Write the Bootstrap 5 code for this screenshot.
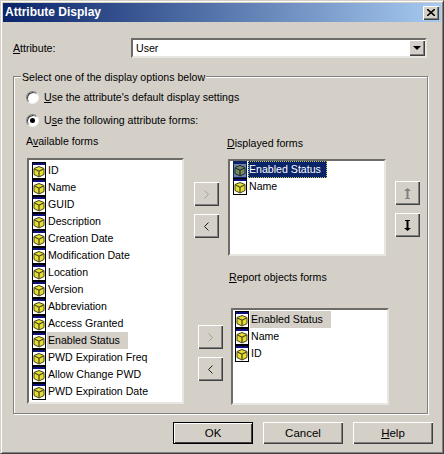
<!DOCTYPE html>
<html lang="en">
<head>
<meta charset="utf-8">
<title>Attribute Display</title>
<link rel="stylesheet" href="https://cdn.jsdelivr.net/npm/bootstrap@5.3.0/dist/css/bootstrap.min.css">
<style>
html,body{margin:0;padding:0;width:444px;height:454px;overflow:hidden;background:#d4d0c8}
body{font-family:"Liberation Sans",Arial,sans-serif;font-size:10.6px;line-height:13px;color:#000}
u{text-decoration:underline;text-underline-offset:1px}
.dlg{width:444px;height:454px;background:#d4d0c8;border:1px solid;border-color:#d4d0c8 #404040 #404040 #d4d0c8;box-shadow:inset 1px 1px 0 #fff,inset -1px -1px 0 #808080;padding:2px}
.tbar{height:19px;margin-top:0;background:linear-gradient(90deg,#0a246a,#a6caf0);color:#fff;font-weight:700;font-size:12px;padding:0 2px 0 2px}
.xbtn{width:16px;height:14px;background:#d4d0c8;border:0;padding:0;box-shadow:inset 1px 1px 0 #fff,inset -1px -1px 0 #404040,inset -2px -2px 0 #808080}
.attr-row{height:20px;margin:16px 12px 0 10px}
.attr-lbl{width:118px}
.combo{width:296px;height:20px;background:#fff;border:2px solid;border-color:#6e6c68 #e8e6e0 #e8e6e0 #6e6c68;padding-left:3px}
.drop{width:16px;height:16px;background:#d4d0c8;box-shadow:inset 1px 1px 0 #fff,inset -1px -1px 0 #404040,inset -2px -2px 0 #808080}
.gbox{position:relative;width:415px;height:338px;margin:18px 0 0 10px;border:1px solid #808080;box-shadow:1px 1px 0 #fff,inset 1px 1px 0 #fff;padding:13px 0 0 12px}
.gtitle{position:absolute;left:7px;top:-6px;background:#d4d0c8;padding:0 1px}
.rline{height:14px;margin-bottom:9px}
.rdo{width:13px;height:13px;border-radius:50%;background:#fff;border:1px solid;border-color:#808080 #f4f2ee #f4f2ee #808080;box-shadow:inset 1px 1px 0 #404040;margin-right:5px;position:relative}
.rdo.on::after{content:"";position:absolute;left:3px;top:3px;width:5px;height:5px;border-radius:50%;background:#000}
.col-a{width:157px;margin-top:-1px}
.col-b{margin-left:9px}
.lbl-a{height:13px;margin-bottom:10px}
.lst{background:#fff;border:2px solid;border-color:#6e6c68 #e8e6e0 #e8e6e0 #6e6c68;overflow:hidden;padding-top:1px}
.lst-a{width:157px;height:246px;margin-left:1px;padding-top:2px;padding-left:1px}
.lst-b{width:158px;height:97px}
.lst-c{padding-top:0}
.lst-c .itm{padding-left:3px}
.itm{height:17px;padding-left:2px}
.ico{flex:0 0 14px;width:14px;height:17px;display:block}
.txt{height:17px;line-height:17px;padding:0 1px;margin-left:1px;white-space:nowrap}
.cur .txt{background:#d4d0c8;padding-right:8px}
.sel .txt{background:#0a246a;color:#fff;outline:1px dotted #c8c860;outline-offset:-1px;padding:0 6px 0 1px}
.arw{width:25px;height:24px;background:#d4d0c8;border:0;padding:0;box-shadow:inset 1px 1px 0 #fff,inset -1px -1px 0 #404040,inset -2px -2px 0 #808080;color:#000}
.arw-col{width:25px;gap:8px}
.sec-one{margin-top:1px}
.sec-one .arw-col{margin:23px 9px 0 2px}
.sec-one .arw-side{margin:22px 0 0 9px}
.sec-one .lbl-b{margin-left:35px;height:13px;margin-bottom:9px}
.sec-two{margin-top:15px}
.sec-two .lbl-b{margin-left:37px;height:13px;margin-bottom:24px}
.sec-two .arw-col{margin:17px 8px 0 6px}
.foot{margin:8px 0 0 170px;gap:10px}
.dbtn{width:80px;height:22px;background:#d4d0c8;border:0;padding:0;font-size:11.5px;box-shadow:inset 1px 1px 0 #fff,inset -1px -1px 0 #404040,inset -2px -2px 0 #808080;color:#000}
.dbtn.def{outline:1px solid #000;outline-offset:-1px;box-shadow:inset 2px 2px 0 #fff,inset -2px -2px 0 #404040}
</style>
</head>
<body>
<svg width="0" height="0" class="position-absolute">
<symbol id="cube" viewBox="0 0 14 17">
<rect width="14" height="17" fill="#000"/>
<rect x="1" y="1" width="12" height="2" fill="#10107c"/>
<rect x="1" y="3" width="12" height="13" fill="#fff"/>
<path d="M7 4.500 12 6.500v6L7 15 2 12.500v-6z" fill="#e6de30" stroke="#44401c"/>
<path d="M2.500 7 7 9.200 11.500 7M7 9.200V14.500" fill="none" stroke="#44401c" stroke-width="1.200"/>
</symbol>
<symbol id="cubesel" viewBox="0 0 14 17">
<rect width="14" height="17" fill="#0a246a"/>
<rect x="1" y="3" width="12" height="13" fill="#7080a8"/>
<path d="M7 4.500 12 6.500v6L7 15 2 12.500v-6z" fill="#7a8a5c" stroke="#1c2a30"/>
<path d="M2.500 7 7 9.200 11.500 7M7 9.200V14.500" fill="none" stroke="#1c2a30" stroke-width="1.200"/>
</symbol>
<symbol id="chevr" viewBox="0 0 5 9"><path d="M.5.500 4.500 4.500.5 8.500" fill="none" stroke="#a0a0a0"/></symbol>
<symbol id="chevl" viewBox="0 0 5 9"><path d="M4.500.500.5 4.500 4.500 8.500" fill="none" stroke="#202020"/></symbol>
</svg>
<div class="dlg">
  <div class="tbar d-flex align-items-center justify-content-between"><span>Attribute Display</span>
    <button class="xbtn d-flex align-items-center justify-content-center" aria-label="Close"><svg width="8" height="7" viewBox="0 0 8 7"><path d="M0 0 8 7M8 0 0 7" stroke="#000" stroke-width="1.6"/></svg></button>
  </div>
  <div class="attr-row d-flex align-items-center">
    <div class="attr-lbl"><u>A</u>ttribute:</div>
    <div class="combo d-flex align-items-center justify-content-between"><span>User</span><span class="drop d-flex align-items-center justify-content-center"><svg width="8" height="4" viewBox="0 0 8 4"><path d="M0 0h8L4 4z"/></svg></span></div>
  </div>
  <div class="gbox">
    <div class="gtitle">Select one of the display options below</div>
    <div class="rline d-flex align-items-center"><span class="rdo"></span><span><u>U</u>se the attribute's default display settings</span></div>
    <div class="rline d-flex align-items-center"><span class="rdo on"></span><span>U<u>s</u>e the following attribute forms:</span></div>
    <div class="d-flex">
      <div class="col-a">
        <div class="lbl-a">A<u>v</u>ailable forms</div>
        <div class="lst lst-a">
          <div class="itm d-flex"><svg class="ico"><use href="#cube"/></svg><span class="txt">ID</span></div>
          <div class="itm d-flex"><svg class="ico"><use href="#cube"/></svg><span class="txt">Name</span></div>
          <div class="itm d-flex"><svg class="ico"><use href="#cube"/></svg><span class="txt">GUID</span></div>
          <div class="itm d-flex"><svg class="ico"><use href="#cube"/></svg><span class="txt">Description</span></div>
          <div class="itm d-flex"><svg class="ico"><use href="#cube"/></svg><span class="txt">Creation Date</span></div>
          <div class="itm d-flex"><svg class="ico"><use href="#cube"/></svg><span class="txt">Modification Date</span></div>
          <div class="itm d-flex"><svg class="ico"><use href="#cube"/></svg><span class="txt">Location</span></div>
          <div class="itm d-flex"><svg class="ico"><use href="#cube"/></svg><span class="txt">Version</span></div>
          <div class="itm d-flex"><svg class="ico"><use href="#cube"/></svg><span class="txt">Abbreviation</span></div>
          <div class="itm d-flex"><svg class="ico"><use href="#cube"/></svg><span class="txt">Access Granted</span></div>
          <div class="itm d-flex cur"><svg class="ico"><use href="#cube"/></svg><span class="txt">Enabled Status</span></div>
          <div class="itm d-flex"><svg class="ico"><use href="#cube"/></svg><span class="txt">PWD Expiration Freq</span></div>
          <div class="itm d-flex"><svg class="ico"><use href="#cube"/></svg><span class="txt">Allow Change PWD</span></div>
          <div class="itm d-flex"><svg class="ico"><use href="#cube"/></svg><span class="txt">PWD Expiration Date</span></div>
        </div>
      </div>
      <div class="col-b">
        <div class="sec-one">
          <div class="lbl-b"><u>D</u>isplayed forms</div>
          <div class="d-flex">
            <div class="arw-col d-flex flex-column">
              <button class="arw d-flex align-items-center justify-content-center" aria-label="Add"><svg width="5" height="9"><use href="#chevr"/></svg></button>
              <button class="arw d-flex align-items-center justify-content-center" aria-label="Remove"><svg width="5" height="9"><use href="#chevl"/></svg></button>
            </div>
            <div class="lst lst-b lst-c">
              <div class="itm d-flex sel"><svg class="ico"><use href="#cubesel"/></svg><span class="txt">Enabled Status</span></div>
              <div class="itm d-flex"><svg class="ico"><use href="#cube"/></svg><span class="txt">Name</span></div>
            </div>
            <div class="arw-col arw-side d-flex flex-column">
              <button class="arw d-flex align-items-center justify-content-center" aria-label="Move up"><svg width="7" height="11" viewBox="0 0 7 11"><path d="M3.500 0 7 3H4.500v7H6v1H1v-1h1.500V3H0z" fill="#808080"/></svg></button>
              <button class="arw d-flex align-items-center justify-content-center" aria-label="Move down"><svg width="7" height="11" viewBox="0 0 7 11"><path d="M3.500 11 7 8H4.500V1H6V0H1v1h1.500v7H0z" fill="#000"/></svg></button>
            </div>
          </div>
        </div>
        <div class="sec-two">
          <div class="lbl-b"><u>R</u>eport objects forms</div>
          <div class="d-flex">
            <div class="arw-col d-flex flex-column">
              <button class="arw d-flex align-items-center justify-content-center" aria-label="Add"><svg width="5" height="9"><use href="#chevr"/></svg></button>
              <button class="arw d-flex align-items-center justify-content-center" aria-label="Remove"><svg width="5" height="9"><use href="#chevl"/></svg></button>
            </div>
            <div class="lst lst-b">
              <div class="itm d-flex cur"><svg class="ico"><use href="#cube"/></svg><span class="txt">Enabled Status</span></div>
              <div class="itm d-flex"><svg class="ico"><use href="#cube"/></svg><span class="txt">Name</span></div>
              <div class="itm d-flex"><svg class="ico"><use href="#cube"/></svg><span class="txt">ID</span></div>
            </div>
          </div>
        </div>
      </div>
    </div>
  </div>
  <div class="foot d-flex">
    <button class="dbtn def">OK</button>
    <button class="dbtn">Cancel</button>
    <button class="dbtn"><u>H</u>elp</button>
  </div>
</div>
</body>
</html>
